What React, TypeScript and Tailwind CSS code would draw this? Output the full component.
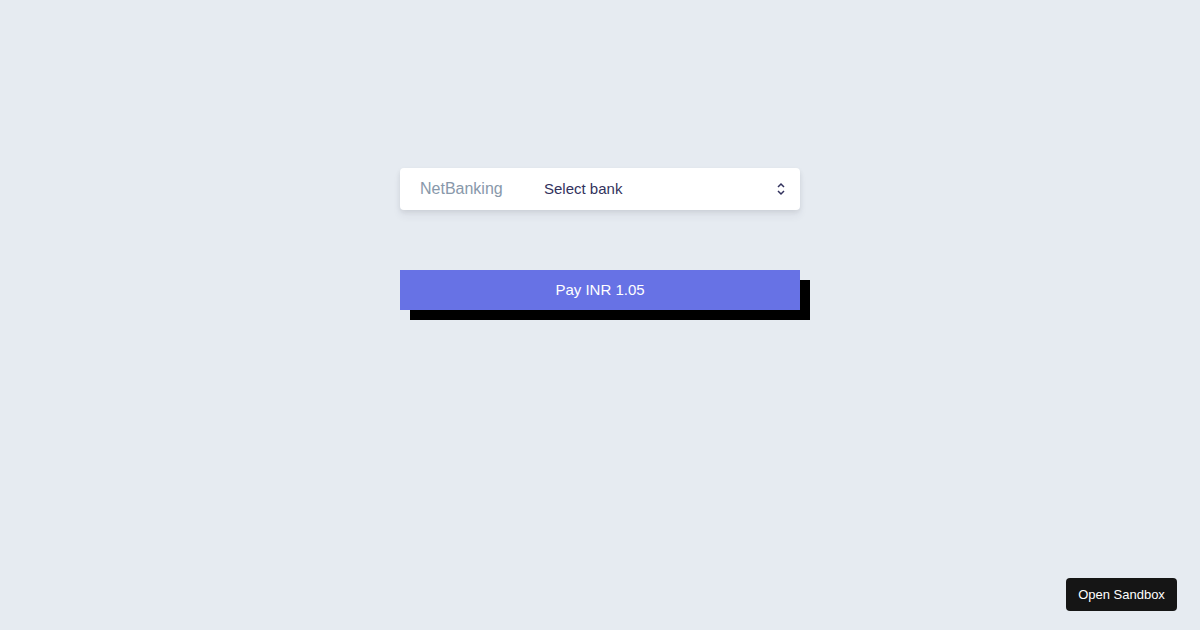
import React from 'react'

export default function App() {
  return (
    <div className="w-[1200px] h-[630px] bg-[#e6ebf1] relative font-['Liberation_Sans',Arial,sans-serif]">
      <div className="flex flex-col items-center pt-[168px]">
        {/* Bank select card */}
        <div className="w-[400px] h-[42px] bg-white rounded-[4px] shadow-[0_6px_9px_rgba(50,50,93,0.06),0_2px_5px_rgba(0,0,0,0.08)] flex items-center pl-5 pr-3">
          <span className="w-[124px] text-[16px] text-[#8898aa]">NetBanking</span>
          <span className="flex-1 text-[15px] text-[#32325d]">Select bank</span>
          <svg width="10" height="14" viewBox="0 0 10 14" fill="none" stroke="#32325d" strokeWidth="1.5" className="mr-[2px]">
            <path d="M2 5l3-3 3 3" />
            <path d="M2 9l3 3 3-3" />
          </svg>
        </div>

        {/* Pay button */}
        <button className="mt-[60px] w-[400px] h-[40px] bg-[#6772e5] text-white text-[15px] shadow-[10px_10px_0_#000]">
          Pay INR 1.05
        </button>
      </div>

      <button className="absolute left-[1066px] top-[578px] w-[111px] h-[33px] bg-[#151515] rounded-[4px] text-[13px] text-white">
        Open Sandbox
      </button>
    </div>
  )
}
